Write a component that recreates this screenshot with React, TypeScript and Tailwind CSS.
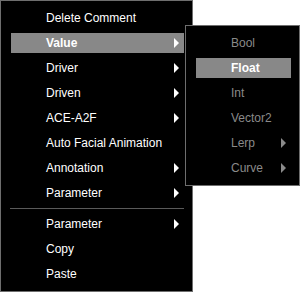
import React from "react";

type Item = { label: string; sub?: boolean; active?: boolean; sep?: boolean };

const mainItems: Item[] = [
  { label: "Delete Comment" },
  { label: "Value", sub: true, active: true },
  { label: "Driver", sub: true },
  { label: "Driven", sub: true },
  { label: "ACE-A2F", sub: true },
  { label: "Auto Facial Animation" },
  { label: "Annotation", sub: true },
  { label: "Parameter", sub: true },
  { label: "", sep: true },
  { label: "Parameter", sub: true },
  { label: "Copy" },
  { label: "Paste" },
];

const subItems: Item[] = [
  { label: "Bool" },
  { label: "Float", active: true },
  { label: "Int" },
  { label: "Vector2" },
  { label: "Lerp", sub: true },
  { label: "Curve", sub: true },
];

function Arrow({ color }: { color: string }) {
  return (
    <svg width="5" height="10" viewBox="0 0 5 10" className="shrink-0">
      <polygon points="0,0 5,5 0,10" fill={color} />
    </svg>
  );
}

export default function App() {
  return (
    <div
      className="relative w-[302px] h-[292px] bg-white"
      style={{ fontFamily: '"Liberation Sans", Arial, sans-serif' }}
    >
      <div className="w-[193px] h-[292px] bg-black border border-[#6e6e6e] pt-[7px] pb-[7px] flex flex-col gap-[5px]">
        {mainItems.map((it, i) =>
          it.sep ? (
            <div key={i} className="ml-[9px] w-[174px] h-0 border-t border-[#5a5a5a]" />
          ) : (
            <div
              key={i}
              className={`ml-[10px] w-[173px] h-5 flex items-center pl-[35px] pr-[5px] text-[12px] leading-none ${
                it.active ? "bg-[#888888] font-bold text-white" : "text-white"
              }`}
            >
              <span className="flex-1">{it.label}</span>
              {it.sub && <Arrow color="#ffffff" />}
            </div>
          )
        )}
      </div>

      <div className="absolute left-[185px] top-[25px] w-[115px] bg-black border border-[#6e6e6e] pt-[7px] pb-[7px] flex flex-col gap-[5px]">
        {subItems.map((it, i) => (
          <div
            key={i}
            className={`ml-[10px] w-[95px] h-5 flex items-center pl-[35px] pr-[5px] text-[12px] leading-none ${
              it.active ? "bg-[#888888] font-bold text-white" : "text-[#8a8a8a]"
            }`}
          >
            <span className="flex-1">{it.label}</span>
            {it.sub && <Arrow color="#8a8a8a" />}
          </div>
        ))}
      </div>
    </div>
  );
}
